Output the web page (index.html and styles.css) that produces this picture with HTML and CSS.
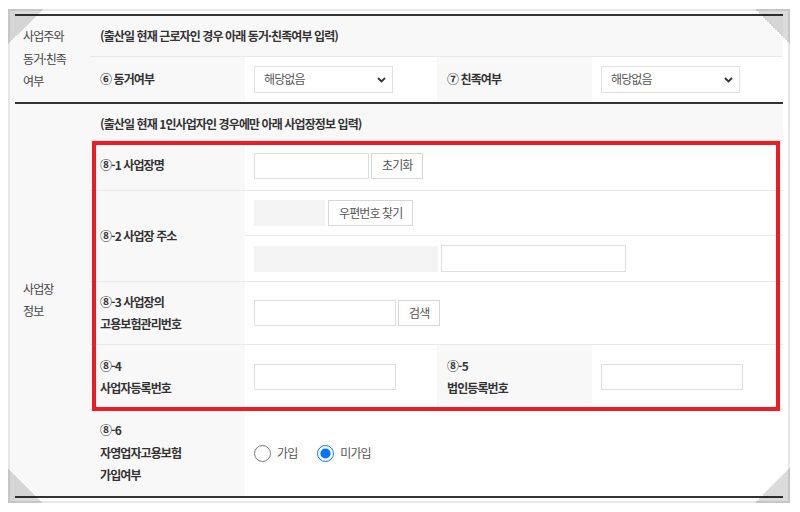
FILE: index.html
```html
<!DOCTYPE html>
<html lang="ko">
<head>
    <meta charset="UTF-8">
    <title>사업장 정보 입력</title>
    <link rel="stylesheet" href="styles.css">
</head>
<body>
    <div class="frame">
        <table class="form-table">
            <colgroup>
                <col class="col-group">
                <col class="col-label">
                <col class="col-value">
                <col class="col-label">
                <col class="col-value">
            </colgroup>
            <tbody>
                <tr class="row-note">
                    <th class="group" rowspan="2">사업주와<br>동거·친족<br>여부</th>
                    <td class="note" colspan="4">(출산일 현재 근로자인 경우 아래 동거·친족여부 입력)</td>
                </tr>
                <tr class="row-select last">
                    <th>⑥ 동거여부</th>
                    <td>
                        <span class="select">
                            <select><option>해당없음</option></select>
                            <svg width="9" height="6" viewBox="0 0 9 6"><path d="M1 1l3.5 3.5L8 1" fill="none" stroke="#333" stroke-width="1.8"/></svg>
                        </span>
                    </td>
                    <th>⑦ 친족여부</th>
                    <td>
                        <span class="select">
                            <select><option>해당없음</option></select>
                            <svg width="9" height="6" viewBox="0 0 9 6"><path d="M1 1l3.5 3.5L8 1" fill="none" stroke="#333" stroke-width="1.8"/></svg>
                        </span>
                    </td>
                </tr>
            </tbody>
            <tbody>
                <tr class="row-note2">
                    <th class="group" rowspan="7">사업장<br>정보</th>
                    <td class="note note-low" colspan="4">(출산일 현재 1인사업자인 경우에만 아래 사업장정보 입력)</td>
                </tr>
                <tr class="row-name">
                    <th>⑧-1 사업장명</th>
                    <td colspan="3">
                        <div class="inline">
                            <input class="field field-name" type="text">
                            <button class="btn" type="button">초기화</button>
                        </div>
                    </td>
                </tr>
                <tr class="row-addr1">
                    <th rowspan="2">⑧-2 사업장 주소</th>
                    <td colspan="3">
                        <div class="inline wide">
                            <span class="readonly zip"></span>
                            <button class="btn" type="button">우편번호 찾기</button>
                        </div>
                    </td>
                </tr>
                <tr class="row-addr2">
                    <td colspan="3">
                        <div class="inline wide">
                            <span class="readonly addr"></span>
                            <input class="field field-addr" type="text">
                        </div>
                    </td>
                </tr>
                <tr class="row-mgmt">
                    <th>⑧-3 사업장의<br>고용보험관리번호</th>
                    <td colspan="3">
                        <div class="inline">
                            <input class="field field-num" type="text">
                            <button class="btn" type="button">검색</button>
                        </div>
                    </td>
                </tr>
                <tr class="row-reg">
                    <th>⑧-4<br>사업자등록번호</th>
                    <td><input class="field field-num" type="text"></td>
                    <th>⑧-5<br>법인등록번호</th>
                    <td><input class="field field-num" type="text"></td>
                </tr>
                <tr class="row-radio last">
                    <th>⑧-6<br>자영업자고용보험<br>가입여부</th>
                    <td colspan="3">
                        <div class="radios">
                            <label class="radio"><input type="radio" name="join"> 가입</label>
                            <label class="radio"><input type="radio" name="join" checked> 미가입</label>
                        </div>
                    </td>
                </tr>
            </tbody>
        </table>

        <div class="highlight"></div>

        <span class="fold fold-tl"></span>
        <span class="fold fold-tr"></span>
        <span class="fold fold-bl"></span>
        <span class="fold fold-br"></span>
    </div>
</body>
</html>
```

FILE: styles.css
```css
* {
    box-sizing: border-box;
}

body {
    margin: 0;
    background: #fff;
    font-family: "Noto Sans CJK KR", "Noto Sans", sans-serif;
    font-size: 12px;
    letter-spacing: -0.9px;
    color: #333;
}

/* blog style frame round the capture */
.frame {
    position: relative;
    width: 782px;
    height: 494px;
    margin: 9px 0 0 8px;
    padding: 3px 5px 0 5px;
    border: 2px solid #e6e6e6;
    background: linear-gradient(to right, #f8f8f8 5px, #fff 5px);
}

.fold {
    position: absolute;
    width: 35px;
    height: 35px;
}

.fold-tl {
    left: -2px;
    top: -2px;
    background: linear-gradient(135deg, rgba(0, 0, 0, 0.14) 50%, transparent 50%);
}

.fold-tr {
    right: -2px;
    top: -2px;
    background: linear-gradient(225deg, rgba(0, 0, 0, 0.14) 50%, transparent 50%);
}

.fold-bl {
    left: -2px;
    bottom: -2px;
    background: linear-gradient(45deg, rgba(0, 0, 0, 0.14) 50%, transparent 50%);
}

.fold-br {
    right: -2px;
    bottom: -2px;
    background: linear-gradient(315deg, rgba(0, 0, 0, 0.14) 50%, transparent 50%);
}

.highlight {
    position: absolute;
    left: 82px;
    top: 130px;
    width: 688px;
    height: 270px;
    border: 4px solid #ed1c24;
}

/* form table */
.form-table {
    width: 768px;
    table-layout: fixed;
    border-collapse: separate;
    border-spacing: 0;
    border-top: 2px solid #333;
    border-bottom: 2px solid #333;
}

.col-group { width: 75px; }
.col-label { width: 155px; }
.col-value { width: 192px; }
.col-value:last-child { width: 191px; }

.form-table th,
.form-table td {
    border-bottom: 1px solid #e8e8e8;
    vertical-align: middle;
    line-height: 22.5px;
}

.form-table tr.last > *,
.form-table th.group {
    border-bottom: 0;
}

.form-table tbody + tbody tr:first-child > * {
    border-top: 2px solid #333;
}

.form-table th {
    padding: 0 10px;
    text-align: left;
    font-weight: 700;
    background: #f8f8f8;
}

.form-table th.group {
    padding-left: 8px;
    font-weight: 400;
    color: #444;
}

.form-table td {
    padding: 0 8px 0 9px;
    background: #fff;
}

.form-table td.note {
    padding-left: 10px;
    font-weight: 700;
    background: #f8f8f8;
}

.form-table td.note-low {
    padding-top: 5px;
}

.row-note { height: 41px; }
.row-select { height: 45px; }
.row-note2 { height: 39px; }
.row-name { height: 50px; }
.row-addr1 { height: 45px; }
.row-addr2 { height: 46px; }
.row-mgmt { height: 63px; }
.row-reg { height: 65px; }
.row-radio { height: 86px; }

/* controls */
input,
select,
button {
    font: inherit;
    letter-spacing: inherit;
    margin: 0;
}

.inline {
    display: flex;
    align-items: center;
    gap: 2px;
}

.inline.wide {
    gap: 3px;
}

.field {
    height: 26px;
    padding: 0 6px;
    border: 1px solid #dedede;
    background: #fff;
    outline: none;
}

.field-name { width: 115px; }
.field-num { width: 142px; }
.field-addr { width: 185px; height: 27px; }

.readonly {
    display: block;
    height: 26px;
    background: #f4f4f4;
}

.zip { width: 71px; }
.addr { width: 184px; }

.btn {
    height: 26px;
    padding: 0 10px;
    border: 1px solid #d6d6d6;
    background: #fff;
    color: #555;
}

.select {
    position: relative;
    display: block;
    width: 139px;
}

.select select {
    width: 100%;
    height: 27px;
    padding: 0 20px 0 9px;
    border: 1px solid #e0e0e0;
    background: #fff;
    color: #555;
    appearance: none;
    -webkit-appearance: none;
}

.select svg {
    position: absolute;
    right: 7px;
    top: 11px;
    pointer-events: none;
}

.radios {
    display: flex;
    align-items: center;
    gap: 20px;
}

.radio {
    display: flex;
    align-items: center;
    gap: 6px;
    color: #555;
}

.radio input {
    width: 17px;
    height: 17px;
}
```
